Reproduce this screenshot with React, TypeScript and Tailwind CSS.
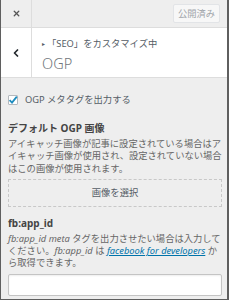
import React from "react";
import { X, ChevronLeft } from "lucide-react";

const font = "font-['Noto_Sans','Noto_Sans_CJK_JP',sans-serif]";

const SectionTitle = ({ children }: { children: React.ReactNode }) => (
  <div className="text-[10px] font-bold leading-[14px] text-[#444]">{children}</div>
);

const Description = ({ children }: { children: React.ReactNode }) => (
  <p className="mt-[3px] whitespace-nowrap text-[9.3px] leading-[12.3px] text-[#666]">
    {children}
  </p>
);

export default function App() {
  return (
    <div
      className={`${font} flex h-[300px] w-[229px] flex-col overflow-hidden border-b border-l border-r-2 border-[#5f5f5f] bg-[#eeeeee]`}
    >
      {/* top bar */}
      <div className="flex h-[28px] shrink-0 border-b border-[#dddddd] bg-[#eeeeee]">
        <div className="flex w-[31px] items-center justify-center border-r border-[#dddddd] text-[#555]">
          <X size={9} strokeWidth={3.5} />
        </div>
        <div className="flex flex-1 items-center justify-end pr-[7px]">
          <button className="flex h-[19px] w-[47px] items-center justify-center rounded-[2px] border border-[#e2e4e7] bg-[#f7f7f7] text-[9.3px] text-[#a0a5aa]">
            公開済み
          </button>
        </div>
      </div>

      {/* section header */}
      <div className="flex h-[50px] shrink-0 border-b border-[#dddddd] bg-white">
        <div className="flex w-[31px] items-center justify-center border-r border-[#dddddd] text-[#23282d]">
          <ChevronLeft size={12} strokeWidth={3.5} />
        </div>
        <div className="flex flex-col pl-[10px] pt-[9px]">
          <div className="flex items-center text-[9.3px] leading-[14px] text-[#555d66]">
            <span className="mr-[2px] text-[6px]">▸</span>
            <span>「SEO」をカスタマイズ中</span>
          </div>
          <div className="mt-[2px] text-[14.5px] font-light leading-[20px] text-[#72777c]">OGP</div>
        </div>
      </div>

      {/* controls */}
      <div className="flex flex-col pl-[7px] pr-[5px] pt-[15px]">
        <label className="flex items-center gap-[7px] text-[9.3px] leading-[13px] text-[#555d66]">
          <span className="flex h-[10px] w-[10px] items-center justify-center rounded-[1px] border border-[#b4b9be] bg-white">
            <svg viewBox="0 0 10 10" className="h-[10px] w-[10px] overflow-visible">
              <path d="M1.6 5.2 L4 7.6 L8.8 1.6" fill="none" stroke="#1e8cbe" strokeWidth="1.8" />
            </svg>
          </span>
          OGP メタタグを出力する
        </label>

        <div className="mt-[15px]">
          <SectionTitle>デフォルト OGP 画像</SectionTitle>
          <Description>
            アイキャッチ画像が記事に設定されている場合はア
            <br />
            イキャッチ画像が使用され、設定されていない場合
            <br />
            はこの画像が使用されます。
          </Description>
          <button className="mt-[4px] flex h-[28px] w-full items-center justify-center border border-dashed border-[#c8c8c8] text-[9.3px] text-[#555d66]">
            画像を選択
          </button>
        </div>

        <div className="mt-[9px]">
          <SectionTitle>fb:app_id</SectionTitle>
          <Description>
            <em>fb:app_id meta</em> タグを出力させたい場合は入力して
            <br />
            ください。<em>fb:app_id</em> は{" "}
            <a className="italic text-[#0073aa] underline">facebook for developers</a> か
            <br />
            ら取得できます。
          </Description>
          <input
            type="text"
            className="mt-[4px] h-[22px] w-full rounded-[2px] border border-[#c4c4c4] bg-white shadow-[inset_0_1px_2px_rgba(0,0,0,0.07)]"
          />
        </div>
      </div>
    </div>
  );
}
